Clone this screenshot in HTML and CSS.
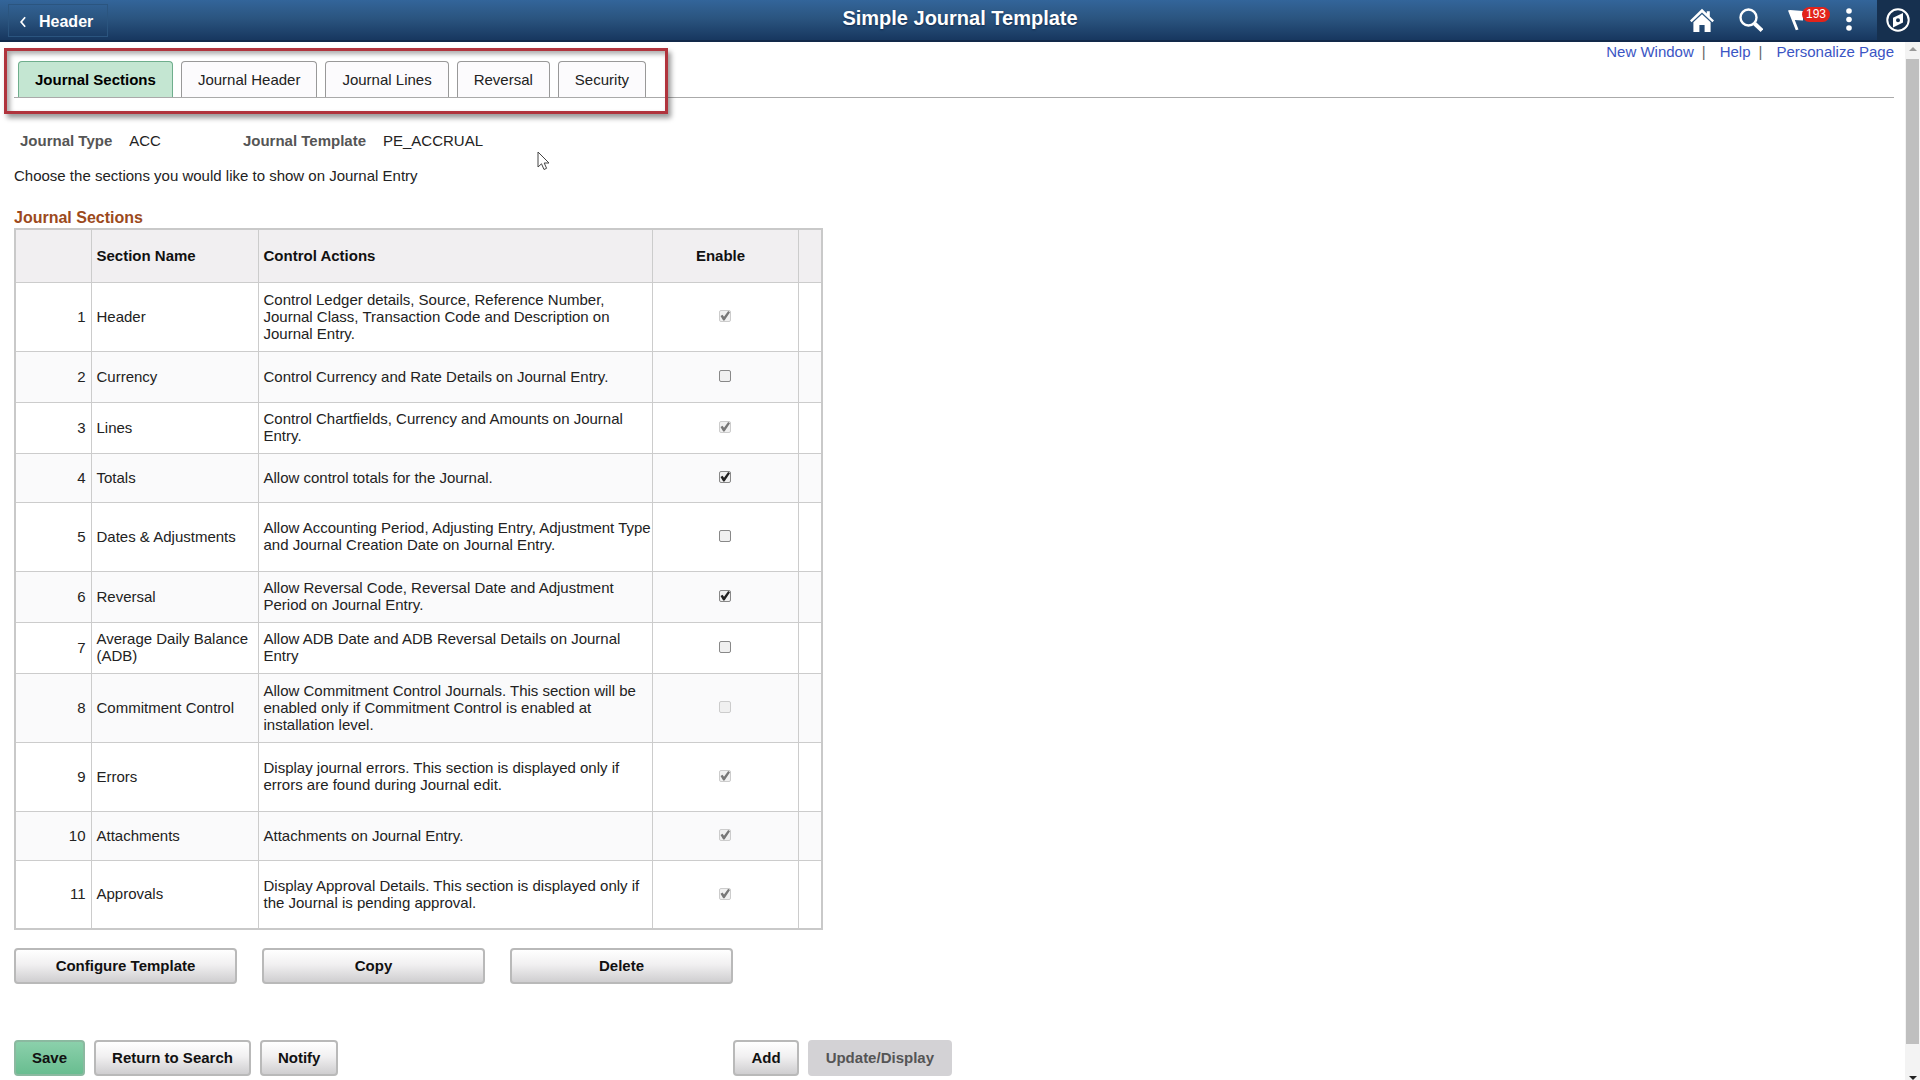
FILE: index.html
```html
<!DOCTYPE html>
<html lang="en">
<head>
<meta charset="utf-8">
<title>Simple Journal Template</title>
<link rel="stylesheet" href="styles.css">
</head>
<body>
<header class="banner">
  <div class="banner-left"><button class="back" type="button">
    <svg class="back-icon" viewBox="0 0 8 14" aria-hidden="true"><path d="M6.5 1.5 1.8 7l4.7 5.5"/></svg>Header</button></div>
  <h1 class="title">Simple Journal Template</h1>
  <div class="tools">
    <button class="tool" type="button" aria-label="Home"><svg viewBox="0 0 24 24"><path fill="#fff" d="M12 .8 0 12.4l1.6 1.8L12 4.4l10.4 9.8 1.6-1.8-4.2-4V3.2h-3v2.3z"/><path fill="#fff" d="M12 6.3 3.4 14.2V24h6v-7h5.2v7h6v-9.8z"/></svg></button>
    <button class="tool" type="button" aria-label="Search"><svg viewBox="0 0 24 24" fill="none" stroke="#fff"><circle cx="9.5" cy="9.5" r="8" stroke-width="2.4"/><path stroke-width="4" d="m15.5 15.5 7.5 7"/></svg></button>
    <button class="tool flag" type="button" aria-label="Notifications, 193"><svg viewBox="0 0 24 24"><path fill="#fff" d="M0 2.5 2 2l13 1v9.5L6.8 12l3.7 9.5-2.7.8z"/></svg><span class="badge">193</span></button>
    <button class="tool dots" type="button" aria-label="Actions"><svg viewBox="0 0 6 24" fill="#fff"><circle cx="3" cy="3" r="2.8"/><circle cx="3" cy="11.5" r="2.8"/><circle cx="3" cy="20" r="2.8"/></svg></button>
    <button class="tool compass" type="button" aria-label="NavBar"><svg viewBox="0 0 24 24"><circle cx="12" cy="12" r="10.7" fill="none" stroke="#fff" stroke-width="2"/><path fill="#fff" fill-rule="evenodd" d="M17 5v9.5L7 19.5V9.8zM12 10.2a2 2 0 1 0 0 4 2 2 0 0 0 0-4z"/></svg></button>
  </div>
</header>
<div class="page">
  <main class="content">
    <div class="top">
      <nav class="tabs" aria-label="Template pages">
        <a class="tab active" href="#sections" aria-current="page">Journal Sections</a>
        <a class="tab" href="#header">Journal Header</a>
        <a class="tab" href="#lines">Journal Lines</a>
        <a class="tab" href="#reversal">Reversal</a>
        <a class="tab" href="#security">Security</a>
      </nav>
      <div class="links"><a href="#new">New Window</a><span>|</span><a class="help" href="#help">Help</a><span>|</span><a class="personalize" href="#personalize">Personalize Page</a></div>
      <div class="callout"></div>
    </div>
    <dl class="keys">
      <div class="key"><dt>Journal Type</dt><dd>ACC</dd></div>
      <div class="key"><dt>Journal Template</dt><dd>PE_ACCRUAL</dd></div>
    </dl>
    <svg class="pointer" viewBox="0 0 13 20" aria-hidden="true"><path d="M1 1v15l3.5-3.2L7 18.5l2.6-1.2L7.2 12H12z" fill="#fff" stroke="#444"/></svg>
    <p class="intro">Choose the sections you would like to show on Journal Entry</p>
    <h2 class="caption">Journal Sections</h2>
    <table class="grid">
      <colgroup><col class="c-num"><col class="c-name"><col class="c-action"><col class="c-enable"><col class="c-end"></colgroup>
      <thead><tr><th></th><th>Section Name</th><th>Control Actions</th><th class="center">Enable</th><th></th></tr></thead>
      <tbody>
        <tr class="tall"><td>1</td><td>Header</td><td>Control Ledger details, Source, Reference Number,<br>Journal Class, Transaction Code and Description on<br>Journal Entry.</td><td><input type="checkbox" aria-label="Enable Header" checked disabled></td><td></td></tr>
        <tr><td>2</td><td>Currency</td><td>Control Currency and Rate Details on Journal Entry.</td><td><input type="checkbox" aria-label="Enable Currency"></td><td></td></tr>
        <tr><td>3</td><td>Lines</td><td>Control Chartfields, Currency and Amounts on Journal<br>Entry.</td><td><input type="checkbox" aria-label="Enable Lines" checked disabled></td><td></td></tr>
        <tr class="short"><td>4</td><td>Totals</td><td>Allow control totals for the Journal.</td><td><input type="checkbox" aria-label="Enable Totals" checked></td><td></td></tr>
        <tr class="tall"><td>5</td><td>Dates &amp; Adjustments</td><td>Allow Accounting Period, Adjusting Entry, Adjustment Type<br>and Journal Creation Date on Journal Entry.</td><td><input type="checkbox" aria-label="Enable Dates and Adjustments"></td><td></td></tr>
        <tr><td>6</td><td>Reversal</td><td>Allow Reversal Code, Reversal Date and Adjustment<br>Period on Journal Entry.</td><td><input type="checkbox" aria-label="Enable Reversal" checked></td><td></td></tr>
        <tr><td>7</td><td>Average Daily Balance<br>(ADB)</td><td>Allow ADB Date and ADB Reversal Details on Journal<br>Entry</td><td><input type="checkbox" aria-label="Enable Average Daily Balance"></td><td></td></tr>
        <tr class="tall"><td>8</td><td>Commitment Control</td><td>Allow Commitment Control Journals. This section will be<br>enabled only if Commitment Control is enabled at<br>installation level.</td><td><input type="checkbox" aria-label="Enable Commitment Control" disabled></td><td></td></tr>
        <tr class="tall"><td>9</td><td>Errors</td><td>Display journal errors. This section is displayed only if<br>errors are found during Journal edit.</td><td><input type="checkbox" aria-label="Enable Errors" checked disabled></td><td></td></tr>
        <tr class="short"><td>10</td><td>Attachments</td><td>Attachments on Journal Entry.</td><td><input type="checkbox" aria-label="Enable Attachments" checked disabled></td><td></td></tr>
        <tr class="tall"><td>11</td><td>Approvals</td><td>Display Approval Details. This section is displayed only if<br>the Journal is pending approval.</td><td><input type="checkbox" aria-label="Enable Approvals" checked disabled></td><td></td></tr>
      </tbody>
    </table>
    <div class="actions">
      <button class="btn" type="button">Configure Template</button>
      <button class="btn" type="button">Copy</button>
      <button class="btn" type="button">Delete</button>
    </div>
    <div class="footer">
      <div class="group"><button class="btn save" type="button">Save</button><button class="btn" type="button">Return to Search</button><button class="btn" type="button">Notify</button></div>
      <div class="group"><button class="btn" type="button">Add</button><button class="btn" type="button" disabled>Update/Display</button></div>
    </div>
  </main>
  <div class="scrollbar" aria-hidden="true"><span class="arrow up"></span><span class="thumb"></span><span class="arrow down"></span></div>
</div>
</body>
</html>
```
FILE: styles.css
```css
* { box-sizing: border-box; }
body {
  margin: 0;
  min-height: 100vh;
  display: flex;
  flex-direction: column;
  background: #fff;
  color: #222;
  font: 15px/17px "Liberation Sans", Arial, sans-serif;
}
button { font: inherit; }
a { text-decoration: none; }

.banner {
  display: grid;
  grid-template-columns: 1fr auto 1fr;
  height: 42px;
  background: linear-gradient(#33659a, #2b5580 45%, #17375f);
  border-bottom: 2px solid #12294a;
  color: #fff;
}
.back {
  display: flex;
  align-items: center;
  gap: 12px;
  height: 33px;
  margin: 4px 0 0 8px;
  padding: 2px 14px 0 10px;
  border: 1px solid #2b557f;
  background: transparent;
  color: #fff;
  font-size: 16px;
  font-weight: bold;
}
.back-icon { width: 8px; height: 12px; fill: none; stroke: #fff; stroke-width: 2; }
.title { margin: 0; font-size: 20px; line-height: 36px; text-shadow: 0 1px 2px #12294a; }
.tools { display: flex; justify-content: flex-end; }
.tool {
  display: flex;
  align-items: center;
  position: relative;
  padding: 0;
  margin-right: 25px;
  border: 0;
  background: transparent;
}
.tool svg { flex: none; width: 24px; height: 24px; }
.flag { width: 33px; }
.badge {
  position: absolute;
  left: 14px;
  top: 7px;
  width: 28px;
  border-radius: 8px;
  background: #e2231a;
  color: #fff;
  font-size: 12px;
  line-height: 15px;
  text-align: center;
}
.tool.dots svg { width: 6px; }
.compass { width: 43px; margin: 0; padding-left: 9px; background: #16304f; }

.page { flex: 1; display: flex; }
.content { flex: 1; position: relative; padding: 0 11px 0 14px; }
.top {
  position: relative;
  display: flex;
  justify-content: space-between;
  height: 56px;
  border-bottom: 1px solid #aaa;
}
.tabs { display: flex; align-items: flex-end; gap: 8px; padding-left: 4px; }
.tab {
  padding: 9px 16px;
  border: 1px solid #999;
  border-bottom: 0;
  border-radius: 4px 4px 0 0;
  background: #fcfbfd;
  color: #222;
}
.active { background: #c4e6d2; border-color: #6fae8d; color: #000; font-weight: bold; }
.links { display: flex; gap: 8px; padding-top: 1px; }
.links a { color: #3b55c4; }
.links span { color: #666; }
.help, .personalize { margin-left: 6px; }
.callout {
  position: absolute;
  left: -10px;
  top: 6px;
  width: 664px;
  height: 66px;
  border: 3px solid #b0343d;
  box-shadow: 3px 4px 5px #0006, inset 3px 3px 5px #0005;
  pointer-events: none;
}
.pointer { position: absolute; left: 537px; top: 109px; width: 13px; height: 20px; }

.keys { display: flex; gap: 82px; margin: 34px 0 0 6px; }
.key { display: flex; gap: 17px; }
dt { color: #555; font-weight: bold; }
dd { margin: 0; }
.intro { margin: 18px 0 0; }
.caption { margin: 25px 0 2px; color: #9c4a1c; font-size: 16px; line-height: 17px; }

.grid {
  width: 809px;
  table-layout: fixed;
  border-collapse: collapse;
  border: 2px solid #c9c9c9;
}
.c-num { width: 76px; }
.c-name { width: 167px; }
.c-action { width: 394px; }
.c-enable { width: 146px; }
th, td { border: 1px solid #ccc; padding: 0 5px; text-align: left; white-space: nowrap; }
th { height: 53px; background: #f1eff1; color: #111; }
th.center { padding-right: 14px; text-align: center; }
td { height: 51px; padding-bottom: 1px; }
.tall td { height: 69px; }
.short td { height: 49px; }
tbody tr:nth-child(even) { background: #fafafb; }
td:first-child { text-align: right; }
td:nth-child(4) { text-align: center; }
input {
  appearance: none;
  display: block;
  width: 12px;
  height: 12px;
  margin: 0 auto;
  border: 1px solid #888;
  border-radius: 2px;
  background: #f0f0f0;
}
input:checked::before {
  content: "";
  display: block;
  width: 10px;
  height: 10px;
  background: #222;
  clip-path: polygon(5% 50%, 25% 38%, 40% 58%, 82% 0, 100% 12%, 45% 95%, 32% 95%);
}
input:disabled { border-color: #ccc; }
input:disabled:checked::before { background: #777; }

.actions { display: flex; gap: 25px; margin-top: 18px; }
.actions .btn { width: 223px; }
.btn {
  height: 36px;
  padding: 0 16px 2px;
  border: 2px solid #b9b9b9;
  border-radius: 4px;
  background: linear-gradient(#fff, #f1f0f1 45%, #cfced0);
  color: #111;
  font-weight: bold;
}
.btn:disabled { background: #d3d2d5; border-color: #d3d2d5; color: #555; }
.save { background: linear-gradient(#8bd0ab, #69bd90); border-color: #8bb9a0; }
.footer { display: flex; justify-content: space-between; width: 938px; margin-top: 56px; }
.group { display: flex; gap: 9px; }

.scrollbar {
  display: flex;
  flex-direction: column;
  align-items: center;
  width: 15px;
  background: #f3f3f3;
}
.thumb { flex: 1; width: 13px; margin: 8px 0 32px; background: #bfbfbf; }
.arrow { border: 4px solid transparent; }
.up { border-bottom-color: #999; border-top-width: 2px; margin-top: 3px; }
.down { border-top-color: #222; border-bottom-width: 0; }
```
